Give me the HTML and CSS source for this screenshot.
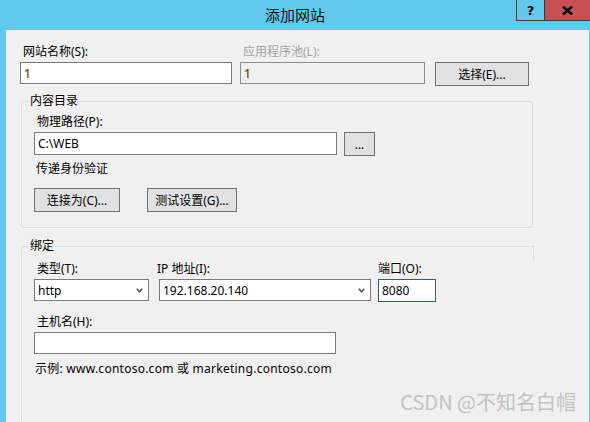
FILE: index.html
```html
<!DOCTYPE html>
<html lang="zh-CN">
<head>
<meta charset="utf-8">
<title>添加网站</title>
<link rel="stylesheet" href="styles.css">
</head>
<body>
<div class="window">
  <header class="titlebar">
    <span class="titlebar-side"></span>
    <h1 class="title">添加网站</h1>
    <div class="caption-buttons">
      <div class="cap cap-help">?</div>
      <div class="cap cap-close">
        <svg width="11" height="9" viewBox="0 0 11 9" aria-hidden="true">
          <path d="M1 0.5 L10 8.5 M10 0.5 L1 8.5" stroke="#000" stroke-width="2.4" fill="none"/>
        </svg>
      </div>
    </div>
  </header>

  <div class="frame">
    <main class="client">
      <div class="site-row">
        <div class="lbl">网站名称(S):</div>
        <div class="lbl lbl-disabled">应用程序池(L):</div>
        <div></div>
        <div class="box box-name"><span class="value-brown">1</span></div>
        <div class="box box-disabled"><span class="value-brown">1</span></div>
        <div class="btn btn-select">选择(E)...</div>
      </div>

      <fieldset class="group group-content">
        <legend class="group-title">内容目录</legend>
        <div class="group-body content-body">
          <div class="lbl">物理路径(P):</div>
          <div class="path-row">
            <div class="box box-path">C:\WEB</div>
            <div class="btn btn-browse">...</div>
          </div>
          <div class="lbl lbl-note">传递身份验证</div>
          <div class="btn-row">
            <div class="btn btn-connect">连接为(C)...</div>
            <div class="btn btn-test">测试设置(G)...</div>
          </div>
        </div>
      </fieldset>

      <fieldset class="group group-binding">
        <legend class="group-title">绑定</legend>
        <div class="group-body binding-body">
          <div class="binding-row">
            <div class="field field-type">
              <div class="lbl">类型(T):</div>
              <div class="box box-select">
                <span>http</span>
                <svg class="chevron" width="7" height="5" viewBox="0 0 7 5" aria-hidden="true">
                  <path d="M0.8 0.8 L3.5 3.8 L6.2 0.8" stroke="#555" stroke-width="1.6" fill="none"/>
                </svg>
              </div>
            </div>
            <div class="field field-ip">
              <div class="lbl lbl-flush">IP 地址(I):</div>
              <div class="box box-select">
                <span>192.168.20.140</span>
                <svg class="chevron" width="7" height="5" viewBox="0 0 7 5" aria-hidden="true">
                  <path d="M0.8 0.8 L3.5 3.8 L6.2 0.8" stroke="#555" stroke-width="1.6" fill="none"/>
                </svg>
              </div>
            </div>
            <div class="field field-port">
              <div class="lbl lbl-port">端口(O):</div>
              <div class="box box-port">8080</div>
            </div>
          </div>
          <div class="lbl lbl-host">主机名(H):</div>
          <div class="box box-host"></div>
          <div class="lbl lbl-example">示例: www.contoso.com 或 marketing.contoso.com</div>
        </div>
      </fieldset>
    </main>
  </div>
</div>
<div class="watermark">CSDN @不知名白帽</div>
</body>
</html>
```
FILE: styles.css
```css
* {
  box-sizing: border-box;
}

html,
body {
  margin: 0;
}

body {
  width: 590px;
  height: 422px;
  overflow: hidden;
  position: relative;
  background: #61c9eb;
  font-family: "Noto Sans", "Noto Sans CJK SC", sans-serif;
  font-size: 12px;
  color: #000;
}

/* ---------- window chrome ---------- */
.window {
  display: flex;
  flex-direction: column;
  height: 422px;
}

.titlebar {
  flex: none;
  height: 30px;
  display: grid;
  grid-template-columns: 1fr auto 1fr;
  align-items: start;
}

.title {
  margin: 0;
  font-family: "Noto Sans CJK SC", sans-serif;
  font-weight: normal;
  font-size: 15px;
  line-height: 30px;
  color: #111;
}

.caption-buttons {
  justify-self: end;
  display: flex;
}

.cap {
  height: 21px;
  display: flex;
  align-items: center;
  justify-content: center;
  border-bottom: 1px solid #3b3b3b;
}

.cap-help {
  width: 28px;
  border-left: 1px solid #3b3b3b;
  font-family: "DejaVu Sans", sans-serif;
  font-weight: bold;
  font-size: 13px;
}

.cap-close {
  width: 46px;
  background: #c75050;
  border-left: 1px solid #3b3b3b;
}

.frame {
  flex: 1;
  display: flex;
  padding: 0 1px 0 6px;
  min-height: 0;
}

.client {
  flex: 1;
  display: flex;
  flex-direction: column;
  background: #f0f0f0;
  padding: 14px 0 0 14px;
}

/* ---------- shared controls ---------- */
.lbl {
  line-height: 16px;
  padding-left: 3px;
  white-space: nowrap;
}

.lbl-disabled {
  color: #a2a2a2;
}

.box {
  height: 22px;
  border: 1px solid #7a7a7a;
  background: #fff;
  padding: 0 3px;
  display: flex;
  align-items: center;
  white-space: nowrap;
}

.value-brown {
  color: #6b4300;
  font-weight: 500;
}

.btn {
  height: 24px;
  border: 1px solid #707070;
  background: #e1e1e1;
  display: flex;
  align-items: center;
  justify-content: center;
  white-space: nowrap;
}

/* ---------- site name row ---------- */
.site-row {
  display: grid;
  grid-template-columns: 212px 185px 96px;
  column-gap: 8px;
  row-gap: 2px;
  align-items: start;
}

.box-disabled {
  background: #f0f0f0;
  border-color: #8d8d8d;
}

.btn-select {
  margin-left: 2px;
}

/* ---------- group boxes ---------- */
.group {
  margin: 0 0 0 1px;
  padding: 0;
  width: 512px;
  min-width: 0;
  border: 1px solid #d6dfe6;
  border-radius: 3px;
}

.group-title {
  margin-left: 7px;
  padding: 0 1px;
  line-height: 16px;
}

.group-body {
  padding-left: 12px;
}

.group-content {
  margin-top: 7px;
}

.content-body {
  padding-top: 5px;
  padding-bottom: 15px;
}

.path-row {
  margin-top: 2px;
  display: flex;
  gap: 7px;
  align-items: start;
}

.box-path {
  width: 303px;
  height: 23px;
}

.btn-browse {
  width: 31px;
}

.lbl-note {
  margin-top: 5px;
  padding-left: 2px;
}

.btn-row {
  margin-top: 11px;
  display: flex;
  gap: 27px;
}

.btn-connect {
  width: 86px;
}

.btn-test {
  width: 90px;
}

.group-binding {
  position: relative;
  margin-top: 10px;
  flex: 1;
  border-bottom: none;
  border-right: none;
  border-radius: 3px 0 0 0;
}

/* only the top end of the right edge is drawn */
.group-binding::after {
  content: "";
  position: absolute;
  top: -9px;
  right: -1px;
  width: 1px;
  height: 15px;
  background: #d6dfe6;
}

.binding-body {
  padding-top: 7px;
}

.binding-row {
  display: flex;
  align-items: start;
}

.field {
  display: flex;
  flex-direction: column;
  gap: 2px;
}

.field-type {
  width: 115px;
  margin-right: 10px;
}

.field-ip {
  width: 212px;
  margin-right: 7px;
}

.field-port {
  width: 58px;
}

.lbl-flush {
  padding-left: 0;
  margin-left: -2px;
}

.lbl-port {
  padding-left: 0;
}

.box-select {
  justify-content: space-between;
  padding-right: 5px;
}

.box-port {
  height: 23px;
  border-color: #2f5b82;
}

.lbl-host {
  margin-top: 12px;
}

.box-host {
  margin-top: 2px;
  width: 302px;
}

.lbl-example {
  margin-top: 7px;
  padding-left: 1px;
  letter-spacing: 0.25px;
}

/* ---------- overlay ---------- */
.watermark {
  position: absolute;
  right: 14px;
  bottom: 8px;
  font-family: "Noto Sans CJK SC", sans-serif;
  font-size: 20px;
  line-height: 24px;
  color: #c3c3c3;
  white-space: nowrap;
}
```
